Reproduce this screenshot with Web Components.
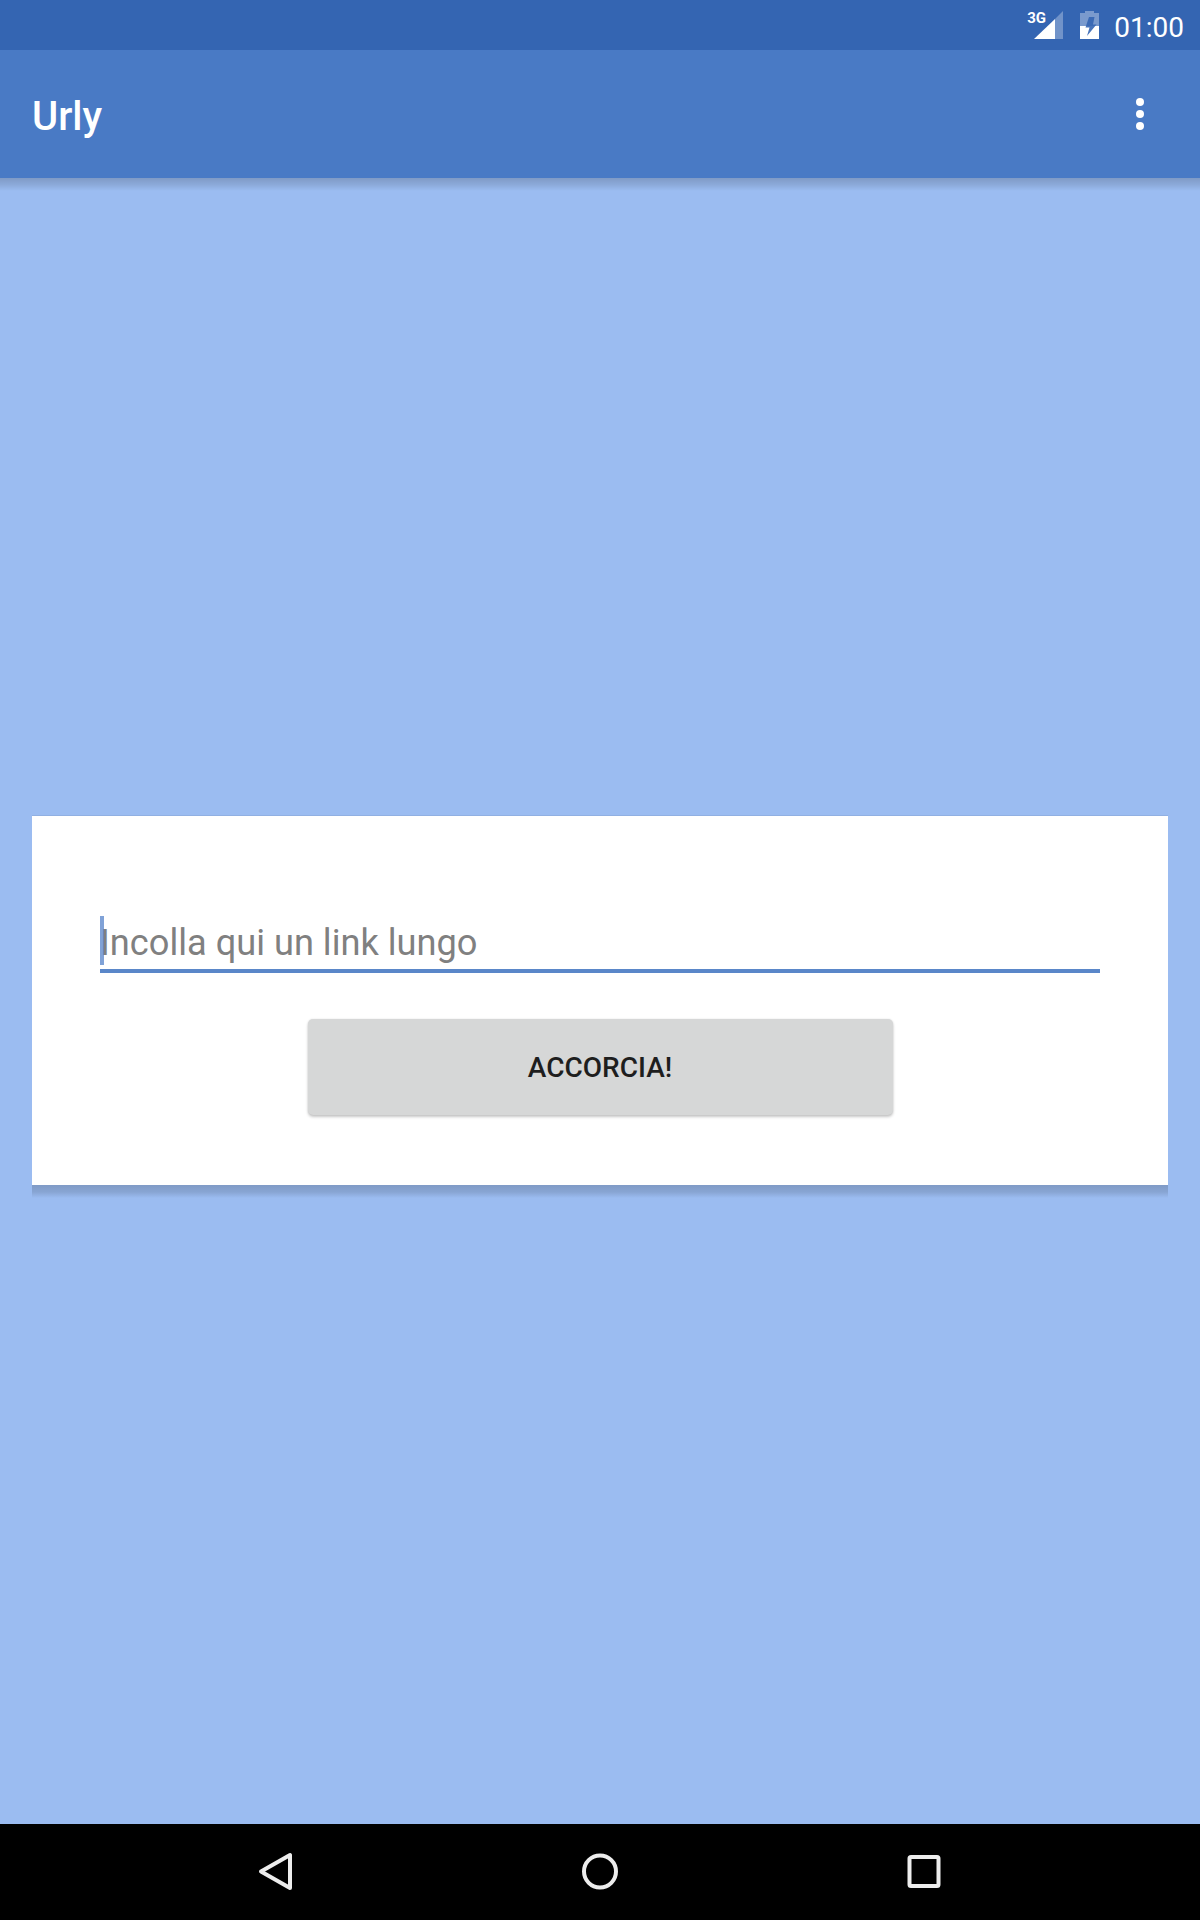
<!DOCTYPE html>
<html lang="it"><head><meta charset="utf-8"><title>Urly</title>
<style>
html,body{margin:0;padding:0;background:#9BBCF1}
body{width:1200px;height:1920px;overflow:hidden;font-family:Roboto,"Liberation Sans",sans-serif}
</style></head><body>
<urly-app>
  <status-bar slot="status">01:00</status-bar>
  <app-bar slot="bar">Urly</app-bar>
  <shorten-card slot="main">
    <link-field placeholder="Incolla qui un link lungo"></link-field>
    <raised-button>ACCORCIA!</raised-button>
  </shorten-card>
  <nav-bar slot="nav"></nav-bar>
</urly-app>
<script>
function def(name, html, init){
  customElements.define(name, class extends HTMLElement{
    constructor(){super();this.attachShadow({mode:'open'}).innerHTML=html;}
    connectedCallback(){if(init)init(this);}
  });
}
def('urly-app',`<style>
:host{display:flex;flex-direction:column;width:1200px;height:1920px}
main{flex:1;display:flex;align-items:center;background:#9BBCF1;padding-bottom:1px}
</style><slot name="status"></slot><slot name="bar"></slot><main><slot name="main"></slot></main><slot name="nav"></slot>`);
def('status-bar',`<style>
:host{display:flex;align-items:center;justify-content:flex-end;height:50px;background:#3465B2;color:#fff;font:400 28px/50px Roboto,sans-serif;padding-right:16px;box-sizing:border-box}
.sig{position:relative;width:36px;height:28px;margin-right:17px;flex:none}
.g{position:absolute;left:0;top:-2px;font:700 15px/18px Roboto,sans-serif}
svg{display:block;flex:none}
.sig svg{position:absolute;right:0;top:0}
.bat{margin-right:15px}
.time{padding-top:6px}
</style>
<div class="sig"><span class="g">3G</span><svg width="29" height="28" viewBox="0 0 29 28"><path d="M29 0V28H21V8z" fill="#fff" fill-opacity=".3"/><path d="M21 8V28H0z" fill="#fff"/></svg></div>
<svg class="bat" width="19" height="28" viewBox="0 0 19 28"><path d="M5 0h9v2h5v13H0V2h5z" fill="#fff" fill-opacity=".35"/><path d="M0 15h19v13H0z" fill="#fff"/><path d="M9 6H14.500L13 13.500H16.500L7 25L9.500 16.500H5.500z" fill="#3465B2" fill-opacity=".9"/></svg>
<span class="time"><slot></slot></span>`);
def('app-bar',`<style>
:host{display:flex;align-items:center;position:relative;z-index:1;height:128px;background:#497AC5;color:#fff;font:500 40px/128px Roboto,sans-serif;padding:0 36px 0 32px;box-sizing:border-box}
.t{flex:1;padding-top:6px;line-height:122px}
svg{display:block}
:host::after{content:"";position:absolute;left:0;right:0;top:100%;height:13px;background:linear-gradient(rgba(0,0,0,.18),rgba(0,0,0,.1) 50%,rgba(0,0,0,0))}
</style><div class="t"><slot></slot></div>
<svg width="48" height="48" viewBox="0 0 48 48" fill="#fff"><circle cx="24" cy="12" r="4"/><circle cx="24" cy="24" r="4"/><circle cx="24" cy="36" r="4"/></svg>`);
def('shorten-card',`<style>
:host{display:flex;flex-direction:column;align-items:center;position:relative;flex:1;margin:0 32px;background:#fff;box-shadow:0 -1px 0 rgba(0,0,0,.06);padding:96px 68px 72px;box-sizing:border-box;height:369px}
:host::after{content:"";position:absolute;left:0;right:0;top:100%;height:13px;background:linear-gradient(rgba(0,0,0,.18),rgba(0,0,0,.12) 55%,rgba(0,0,0,0))}
</style><slot></slot>`);
def('link-field',`<style>
:host{display:block;position:relative;width:100%;height:61px;border-bottom:4px solid #5A87C9;color:#808080;font:400 36.2px/62px Roboto,sans-serif;box-sizing:border-box;margin-bottom:46px;white-space:nowrap;flex:none}
.c{position:absolute;left:0;top:4px;width:4px;height:49px;background:#4A7BC6;opacity:.7}
</style><span class="c"></span><span id="t"></span>`,el=>{el.shadowRoot.getElementById('t').textContent=el.getAttribute('placeholder');});
def('raised-button',`<style>
:host{display:flex;align-items:center;justify-content:center;flex:none;width:585px;height:96px;padding-top:2px;box-sizing:border-box;background:#D6D7D7;border-radius:5px;color:#1E1E1E;font:500 28px/90px Roboto,sans-serif;box-shadow:0 2px 3px rgba(0,0,0,.22),0 0 2px rgba(0,0,0,.1)}
</style><slot></slot>`);
def('nav-bar',`<style>
:host{display:block;height:96px;background:#000}
svg{display:block}
</style><svg width="1200" height="96" viewBox="0 0 1200 96" fill="none" stroke="#EDEDED" stroke-width="4" stroke-linejoin="round"><path d="M290 31V64L261 47.5z"/><circle cx="600" cy="47.5" r="16"/><rect x="909.500" y="33" width="29" height="29" rx="1.500"/></svg>`);
</script>
</body></html>
